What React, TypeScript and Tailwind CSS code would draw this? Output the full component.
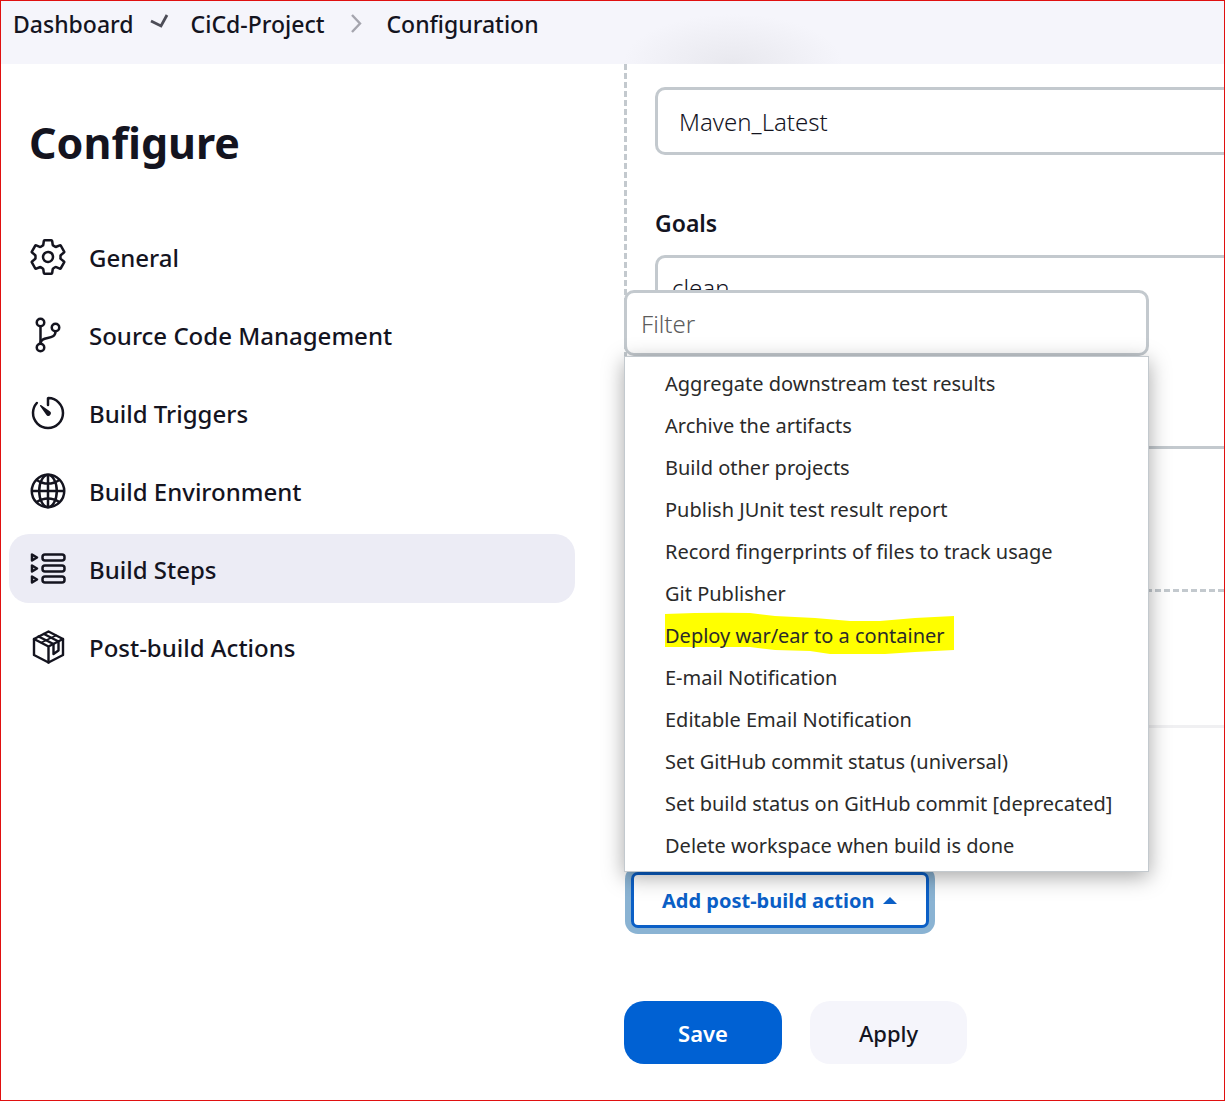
import { ReactNode } from "react";
import { IoGitBranchOutline, IoGlobeOutline, IoSettingsOutline, IoTimerOutline } from "react-icons/io5";

const navItems: { label: string; icon: ReactNode; active?: boolean }[] = [
  { label: "General", icon: <IoSettingsOutline className="size-10" /> },
  { label: "Source Code Management", icon: <IoGitBranchOutline className="size-10" /> },
  { label: "Build Triggers", icon: <IoTimerOutline className="size-10" /> },
  { label: "Build Environment", icon: <IoGlobeOutline className="size-10" /> },
  { label: "Build Steps", icon: <StepsIcon />, active: true },
  { label: "Post-build Actions", icon: <PackageIcon /> },
];

const postBuildActions = [
  "Aggregate downstream test results",
  "Archive the artifacts",
  "Build other projects",
  "Publish JUnit test result report",
  "Record fingerprints of files to track usage",
  "Git Publisher",
  "Deploy war/ear to a container",
  "E-mail Notification",
  "Editable Email Notification",
  "Set GitHub commit status (universal)",
  "Set build status on GitHub commit [deprecated]",
  "Delete workspace when build is done",
];

const HIGHLIGHTED = "Deploy war/ear to a container";

function StepsIcon() {
  return (
    <svg viewBox="0 0 40 40" className="size-10" fill="none" stroke="currentColor" strokeWidth="2.5" strokeLinejoin="round">
      {[8.5, 19.5, 30.5].map((y) => (
        <g key={y}>
          <path d={`M4 ${y - 3}v6l5-3z`} />
          <rect x="14.5" y={y - 3} width="22" height="6" rx="2.5" />
        </g>
      ))}
    </svg>
  );
}

function PackageIcon() {
  return (
    <svg viewBox="0 0 40 40" className="size-10" fill="none" stroke="currentColor" strokeWidth="2.4" strokeLinejoin="round" strokeLinecap="round">
      <path d="M20.500 4.500L35 12V28L20.500 35.500L6 28V12z" />
      <path d="M6 12L20.500 19.500L35 12M20.500 19.500V35.500" />
      <path d="M10.500 9.500L25.500 17V27L30.500 23.500V14.500L16 7" />
      <path d="M13.500 15.500L28 8.500" strokeWidth="1.8" />
    </svg>
  );
}

function Breadcrumbs() {
  return (
    <header className="h-[63px] bg-[#f5f5fb] bg-[radial-gradient(ellipse_110px_50px_at_732px_63px,#e8e8ee,transparent)]">
      <nav aria-label="Breadcrumb" className="flex items-center px-3 pt-[7px] text-[23px] leading-8 font-medium">
        <a href="#dashboard">Dashboard</a>
        <svg viewBox="0 0 20 20" className="ml-4 size-5" fill="none" stroke="#4d4d57" strokeWidth="2.8">
          <path d="M1 7L11 12L17 1" />
        </svg>
        <a href="#project" className="ml-[21px]">CiCd-Project</a>
        <svg viewBox="0 0 20 20" className="mx-[21px] size-5" fill="none" stroke="#a5a5ae" strokeWidth="2.4">
          <path d="M6 1L14 9.500L6 18" />
        </svg>
        <a href="#configuration">Configuration</a>
      </nav>
    </header>
  );
}

function Sidebar() {
  return (
    <aside className="w-[574px] shrink-0 pl-2">
      <h1 className="mt-[47px] ml-5 text-[43px] leading-16 font-bold">Configure</h1>
      <nav aria-label="Configure" className="mt-[47px] flex flex-col gap-[9px]">
        {navItems.map((item) => (
          <a
            key={item.label}
            href="#section"
            aria-current={item.active ? "true" : undefined}
            className={`flex h-[69px] items-center gap-[21px] rounded-[20px] px-[19px] text-[24px] font-medium ${item.active ? "bg-[#ececf5]" : ""}`}
          >
            {item.icon}
            <span className="pt-0.5">{item.label}</span>
          </a>
        ))}
      </nav>
    </aside>
  );
}

function ActionMenu() {
  return (
    <div className="absolute bottom-full -left-[7px] w-[525px]">
      <input
        type="text"
        aria-label="Filter"
        placeholder="Filter"
        className="block h-[66px] w-full rounded-[10px] border-3 border-[#c3c9ce] bg-white px-3.5 text-[24px] font-light outline-none placeholder:text-[#5c5c5c]"
      />
      <ul className="relative border border-[#c3c9ce] bg-white pt-[6px] pb-[4px] text-[20px] text-[#2a2a2a] shadow-[0_5px_20px_rgba(0,0,0,0.35)]">
        {postBuildActions.map((action) => (
          <li key={action} className="h-[42px]">
            <button type="button" className="relative flex h-full w-full items-center pl-10 text-left">
              {action === HIGHLIGHTED && (
                <svg viewBox="0 0 289 42" className="absolute left-10 h-[42px] w-[289px] overflow-visible" fill="#ffff00">
                  <path d="M0 -1Q45 -3 85 -2L110 1L150 3L185 6H215L250 3L289 1V35L250 37L220 39H165L145 36L110 35L85 32H0z" />
                </svg>
              )}
              <span className="relative">{action}</span>
            </button>
          </li>
        ))}
      </ul>
    </div>
  );
}

function BuildForm() {
  return (
    <main className="min-w-0 flex-1 pl-[49px]">
      <section className="h-[528px] border-b-3 border-l-3 border-dashed border-[#c3c9ce] pt-[23px] pl-7">
        <select
          aria-label="Maven Version"
          className="block h-[68px] w-full appearance-none rounded-l-[10px] border-3 border-r-0 border-[#c3c9ce] bg-white px-[21px] pt-0.5 text-[24px] font-light"
        >
          <option>Maven_Latest</option>
        </select>
        <label htmlFor="goals" className="mt-[52px] mb-4 block text-[23px] leading-8 font-semibold">
          Goals
        </label>
        <textarea
          id="goals"
          defaultValue="clean"
          className="block h-[194px] w-full resize-none rounded-l-[10px] border-3 border-r-0 border-[#c3c9ce] bg-white px-3.5 py-3 text-[24px] leading-9 font-light"
        />
      </section>
      <hr className="mt-[133px] border-t-3 border-[#f0f0f2]" />
      <div className="relative mt-36 ml-[7px] w-fit">
        <ActionMenu />
        <button
          type="button"
          className="flex h-[56px] items-center gap-2 rounded-[7px] border-3 border-[#0b5fc6] bg-white px-7 pt-0.5 text-[20px] font-bold text-[#0b5fc6] ring-6 ring-[#8ab3d3]"
        >
          Add post-build action
          <svg viewBox="0 0 16 8" className="h-2 w-4" fill="currentColor">
            <path d="M1 7L8 0L15 7z" />
          </svg>
        </button>
      </div>
      <div className="mt-[73px] flex gap-7">
        <button type="submit" className="h-[63px] w-[158px] rounded-[20px] bg-[#0061d3] pt-0.5 text-[22px] font-semibold text-white">
          Save
        </button>
        <button type="button" className="h-[63px] w-[157px] rounded-[20px] bg-[#f5f5fb] pt-0.5 text-[22px] font-medium">
          Apply
        </button>
      </div>
    </main>
  );
}

export default function App() {
  return (
    <div className="min-h-screen overflow-hidden border border-[#e01010] bg-white font-['Noto_Sans','Open_Sans',sans-serif] text-[#14141f]">
      <Breadcrumbs />
      <div className="flex">
        <Sidebar />
        <BuildForm />
      </div>
    </div>
  );
}
